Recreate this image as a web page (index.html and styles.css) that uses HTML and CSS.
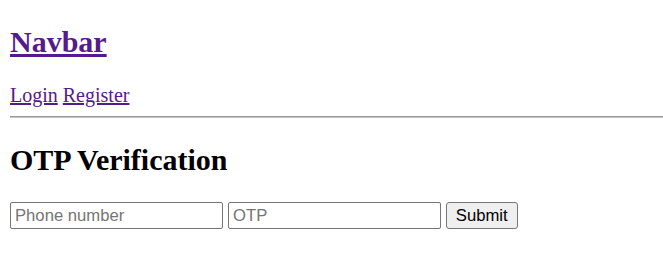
FILE: index.html
```html
<!DOCTYPE html>
<html lang="en">
<head>
<meta charset="utf-8">
<title>OTP Verification</title>
<link rel="stylesheet" href="styles.css">
</head>
<body>
<header class="site-header">
  <h2 class="brand"><a class="link" href="#">Navbar</a></h2>
  <nav class="nav-links">
    <a class="link" href="#">Login</a> <a class="link" href="#">Register</a>
  </nav>
</header>
<hr class="divider">
<main class="content">
  <h2 class="page-title">OTP Verification</h2>
  <form class="otp-form">
    <input class="field" type="text" placeholder="Phone number">
    <input class="field field-otp" type="text" placeholder="OTP">
    <button class="submit-btn" type="button">Submit</button>
  </form>
</main>
</body>
</html>
```

FILE: styles.css
```css
html, body {
  margin: 0;
  padding: 0;
  background: #ffffff;
}

body {
  padding-left: 10px;
  font-family: "Liberation Serif", "Times New Roman", serif;
  font-size: 20px;
  color: #000000;
}

.link {
  color: #551a8b;
  text-decoration: underline;
}

.brand,
.page-title {
  margin: 25px 0;
  font-size: 30px;
  line-height: 34px;
  font-weight: bold;
}

.nav-links {
  line-height: 23px;
}

.divider {
  margin: 9px 0 10px 0;
  height: 0;
  border: 0;
  border-top: 1px solid #9a9a9a;
  border-bottom: 1px solid #c4c4c4;
}

.otp-form {
  display: flex;
  align-items: center;
  gap: 5.5px;
  margin-top: 0;
}

.field {
  box-sizing: border-box;
  width: 212.5px;
  height: 27px;
  margin: 0;
  padding: 1px 4px;
  border: 1px solid #767676;
  border-radius: 2px;
  background: #ffffff;
  font-family: "Liberation Sans", Arial, sans-serif;
  font-size: 16.67px;
  color: #000000;
}

.field::placeholder {
  color: #757575;
  opacity: 1;
}

.submit-btn {
  box-sizing: border-box;
  width: 71.5px;
  height: 27px;
  margin: 0;
  padding: 0 6px;
  border: 1px solid #767676;
  border-radius: 3px;
  background: #efefef;
  font-family: "Liberation Sans", Arial, sans-serif;
  font-size: 16.67px;
  color: #000000;
}
```
